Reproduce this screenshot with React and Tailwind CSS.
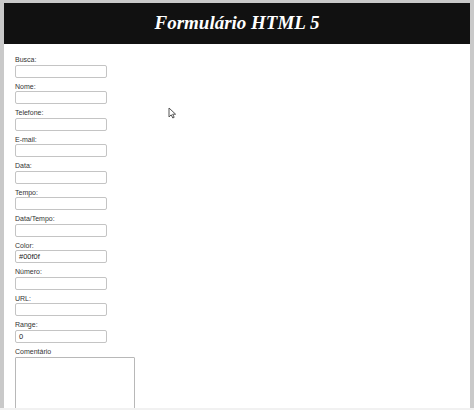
const fields = [
  { label: "Busca:" },
  { label: "Nome:" },
  { label: "Telefone:" },
  { label: "E-mail:" },
  { label: "Data:" },
  { label: "Tempo:" },
  { label: "Data/Tempo:" },
  { label: "Color:", value: "#00f0f" },
  { label: "Número:" },
  { label: "URL:" },
  { label: "Range:", value: "0" },
];

function Cursor() {
  return (
    <svg className="absolute left-[168px] top-[107px]" width="9" height="12" viewBox="0 0 9 12">
      <path d="M1 1 L1 10 L3.2 7.8 L4.8 11 L6.2 10.3 L4.7 7.2 L7.6 7.2 Z" fill="#fff" stroke="#555" strokeWidth="1" strokeLinejoin="round" />
    </svg>
  );
}

export default function App() {
  return (
    <div className="relative w-[474px] h-[410px] overflow-hidden bg-[#c9c9c9] pt-[3px] px-[4px] font-['Liberation_Sans',sans-serif]">
      <div className="h-full bg-white">
        <header className="h-[41px] bg-[#111111] flex items-center justify-center">
          <h1 className="text-white text-[19px] font-bold italic font-['Liberation_Serif',serif]">
            Formulário HTML 5
          </h1>
        </header>
        <form className="pl-[11px] pt-[11px]">
          {fields.map(f => (
            <div key={f.label} className="mb-[4px]">
              <label className="block h-[9px] text-[7px] leading-[9px] text-[#333]">{f.label}</label>
              <div className="mt-[0.5px] w-[92px] h-[13px] border border-[#c4c4c4] rounded-[2px] bg-white text-[7.5px] leading-[11px] pl-[3px] text-[#222]">
                {f.value}
              </div>
            </div>
          ))}
          <div>
            <label className="block h-[9px] text-[7px] leading-[9px] text-[#333]">Comentário</label>
            <div className="mt-[1px] w-[120px] h-[60px] border border-[#b8b8b8] rounded-[1px] bg-white" />
          </div>
        </form>
      </div>
      <div className="absolute left-0 right-0 bottom-0 h-[2px] bg-[#f1f1f1]" />
      <Cursor />
    </div>
  );
}
